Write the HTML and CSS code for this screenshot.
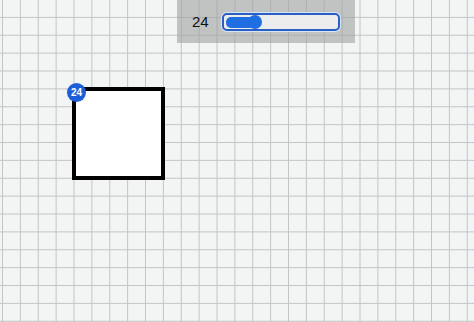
FILE: index.html
```html
<!DOCTYPE html>
<html lang="en">
<head>
    <meta charset="UTF-8">
    <meta name="viewport" content="width=device-width, initial-scale=1.0">
    <title>Shape size</title>
    <link rel="stylesheet" href="styles.css">
</head>
<body>
    <div class="canvas">
        <div class="toolbar">
            <span class="value">24</span>
            <div class="slider">
                <div class="track">
                    <div class="fill" style="width: 27%;"></div>
                    <div class="thumb" style="left: 27%;"></div>
                </div>
            </div>
        </div>
        <div class="shape">
            <span class="badge">24</span>
        </div>
    </div>
</body>
</html>
```

FILE: styles.css
```css
html, body {
    margin: 0;
    height: 100%;
}
body {
    font-family: "Liberation Sans", Arial, sans-serif;
    background-color: #f3f5f5;
}
.canvas {
    position: relative;
    width: 100%;
    height: 100%;
    overflow: hidden;
    background-color: #f3f5f5;
    background-image:
        linear-gradient(to right, #c2c5c5 1px, transparent 1px),
        linear-gradient(to bottom, #c2c5c5 1px, transparent 1px);
    background-size: 17.88px 17.88px;
    background-position: 2px -1px;
}
.toolbar {
    position: absolute;
    left: 177px;
    top: 0;
    width: 178px;
    height: 43px;
    display: flex;
    align-items: center;
    gap: 13px;
    padding-left: 15px;
    box-sizing: border-box;
    background-color: rgba(160, 160, 160, 0.6);
}
.value {
    font-size: 15px;
    color: #111;
}
.slider {
    width: 118px;
    height: 18px;
    box-sizing: border-box;
    border: 2px solid #2a5fbf;
    border-radius: 5px;
    background-color: #ededed;
    box-shadow: 0 0 0 1px #d4e6fb;
    padding: 1px 2px;
    margin-top: 1px;
}
.track {
    position: relative;
    height: 100%;
    display: flex;
    align-items: center;
}
.fill {
    height: 11px;
    background-color: #1f6ee2;
    border-radius: 5px 0 0 5px;
}
.thumb {
    position: absolute;
    top: 50%;
    width: 14px;
    height: 14px;
    margin-left: -7px;
    margin-top: -7px;
    border-radius: 50%;
    background-color: #1f6ee2;
}
.shape {
    position: absolute;
    left: 72px;
    top: 87px;
    width: 93px;
    height: 93px;
    box-sizing: border-box;
    border: 4px solid #000;
    background-color: #fff;
}
.badge {
    position: absolute;
    left: -9px;
    top: -8px;
    width: 19px;
    height: 19px;
    border-radius: 50%;
    background-color: #1c5fd8;
    color: #fff;
    font-size: 10px;
    font-weight: bold;
    line-height: 19px;
    text-align: center;
}
```
